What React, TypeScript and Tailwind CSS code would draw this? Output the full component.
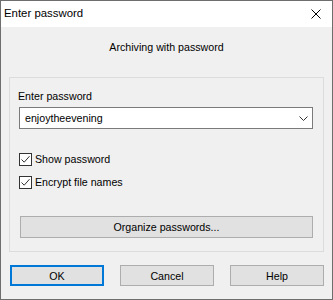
import React from "react";

const font = { fontFamily: '"Liberation Sans", Arial, sans-serif' };

const Check = ({ label }: { label: string }) => (
  <label className="flex items-center h-4 text-[10.67px] text-black">
    <span className="w-[13px] h-[13px] border border-[#333] bg-white flex items-center justify-center">
      <svg width="11" height="11" viewBox="0 0 11 11">
        <path d="M1.5 5.5 L4.2 8.2 L9.5 2.2" fill="none" stroke="#333" strokeWidth="1" />
      </svg>
    </span>
    <span className="ml-[3px]">{label}</span>
  </label>
);

const Btn = ({ label, primary }: { label: string; primary?: boolean }) => (
  <button
    className={
      "w-[94px] h-[21px] bg-[#e1e1e1] text-[10.67px] text-black flex items-center justify-center " +
      (primary ? "border-2 border-[#0078d7]" : "border border-[#adadad]")
    }
  >
    {label}
  </button>
);

export default function App() {
  return (
    <div
      className="w-[333px] h-[300px] border border-[#6e6e6e] flex flex-col bg-[#f0f0f0]"
      style={font}
    >
      <div className="h-[26px] bg-white flex items-center justify-between pl-[3px] pr-[11px]">
        <span className="text-[11.4px] text-black">Enter password</span>
        <svg width="10" height="10" viewBox="0 0 10 10">
          <path d="M0.5 0.5 L9.5 9.5 M9.5 0.5 L0.5 9.5" stroke="#000" strokeWidth="1" />
        </svg>
      </div>
      <div className="flex-1 flex flex-col px-[8px]">
        <div className="mt-[12px] h-4 leading-4 text-center text-[10.67px] text-black">
          Archiving with password
        </div>
        <div className="mt-[22px] border border-[#dcdcdc] flex flex-col pl-[8px] pr-[10px] pt-[10px] pb-[13px]">
          <div className="h-4 leading-4 text-[10.67px] text-black">Enter password</div>
          <div className="ml-[1px] mt-[3px] h-[22px] bg-white border border-[#7a7a7a] flex items-center justify-between pl-[5px] pr-[4px]">
            <span className="text-[10.67px] text-black">enjoytheevening</span>
            <svg width="9" height="5" viewBox="0 0 9 5">
              <path d="M0.5 0.5 L4.5 4.5 L8.5 0.5" fill="none" stroke="#333" strokeWidth="1" />
            </svg>
          </div>
          <div className="ml-[1px] mt-[22px] flex flex-col gap-[7px]">
            <Check label="Show password" />
            <Check label="Encrypt file names" />
          </div>
          <button className="ml-[2px] mt-[26px] h-[22px] bg-[#e1e1e1] border border-[#adadad] text-[10.67px] text-black flex items-center justify-center">
            Organize passwords...
          </button>
        </div>
        <div className="mt-[13px] flex justify-between pl-[1px]">
          <Btn label="OK" primary />
          <Btn label="Cancel" />
          <Btn label="Help" />
        </div>
      </div>
    </div>
  );
}
